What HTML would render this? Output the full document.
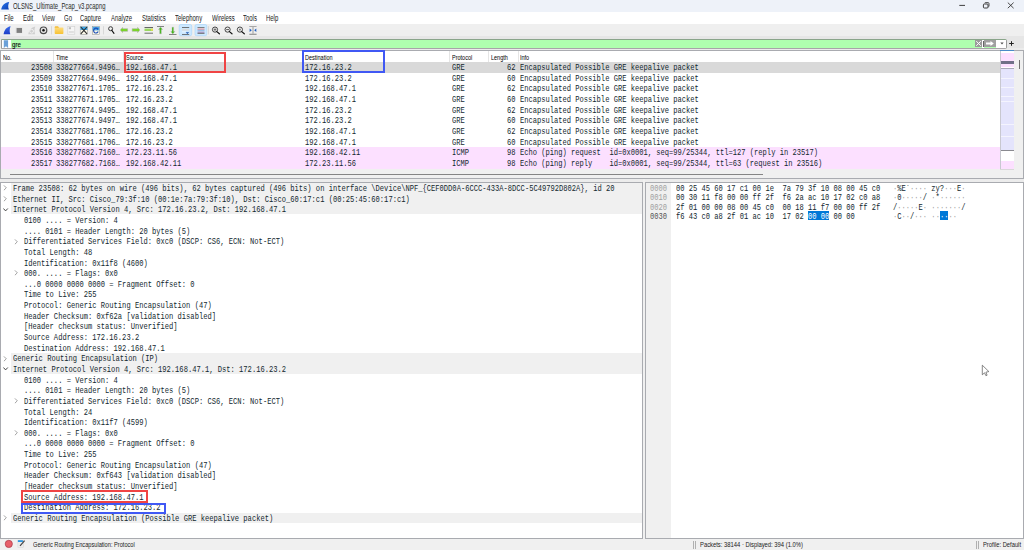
<!DOCTYPE html><html><head><meta charset="utf-8"><style>
html,body{margin:0;padding:0;width:1024px;height:550px;overflow:hidden;background:#fff;position:relative}
.r{position:absolute}
.m{position:absolute;font-family:"Liberation Mono",monospace;font-size:8.2px;line-height:10.667px;height:10.667px;white-space:pre;transform-origin:0 0;transform:scaleX(0.8663)}
.s{position:absolute;font-family:"Liberation Sans",sans-serif;white-space:pre;transform-origin:0 0}
</style></head><body><div class="r" style="left:0px;top:0px;width:1024px;height:12px;background:#eef2f9;"></div>
<div class="s" style="left:13.1px;top:0.30px;font-size:8.4px;transform:scaleX(0.7070);color:#2a2a2a;line-height:12px">OLSNS_Ultimate_Pcap_v3.pcapng</div>
<svg class="r" style="left:0;top:0" width="12" height="12" viewBox="0 0 12 12"><defs><linearGradient id="tf" x1="0" y1="0" x2="1" y2="1"><stop offset="0" stop-color="#2a78f0"/><stop offset="1" stop-color="#0a3cb0"/></linearGradient></defs><path d="M1.2 9.6 C2 5.2 5 2.5 9.2 2.1 C8.1 4.6 7.8 7.2 8.9 9.6 Z" fill="url(#tf)"/></svg>
<svg class="r" style="left:0;top:0" width="1024" height="12" viewBox="0 0 1024 12"><line x1="959.3" y1="5.4" x2="965" y2="5.4" stroke="#2a2a2a" stroke-width="0.9"/><rect x="983.4" y="4" width="4.6" height="4" rx="0.9" fill="none" stroke="#2a2a2a" stroke-width="0.9"/><path d="M984.6 3.2 Q984.8 2.6 985.6 2.6 H988 Q989 2.6 989 3.6 V6 Q989 6.6 988.5 6.8" fill="none" stroke="#2a2a2a" stroke-width="0.8"/><path d="M1007.8 2.6 L1013.6 8.2 M1013.6 2.6 L1007.8 8.2" stroke="#2a2a2a" stroke-width="0.85"/></svg>
<div class="r" style="left:0px;top:12px;width:1024px;height:12px;background:#ffffff;"></div>
<div class="s" style="left:4.4px;top:12.70px;font-size:8.4px;transform:scaleX(0.7100);color:#1a1a1a;line-height:11px">File</div>
<div class="s" style="left:22.7px;top:12.70px;font-size:8.4px;transform:scaleX(0.7100);color:#1a1a1a;line-height:11px">Edit</div>
<div class="s" style="left:41.7px;top:12.70px;font-size:8.4px;transform:scaleX(0.7100);color:#1a1a1a;line-height:11px">View</div>
<div class="s" style="left:63.7px;top:12.70px;font-size:8.4px;transform:scaleX(0.7100);color:#1a1a1a;line-height:11px">Go</div>
<div class="s" style="left:80.3px;top:12.70px;font-size:8.4px;transform:scaleX(0.7100);color:#1a1a1a;line-height:11px">Capture</div>
<div class="s" style="left:111px;top:12.70px;font-size:8.4px;transform:scaleX(0.7100);color:#1a1a1a;line-height:11px">Analyze</div>
<div class="s" style="left:141.7px;top:12.70px;font-size:8.4px;transform:scaleX(0.7100);color:#1a1a1a;line-height:11px">Statistics</div>
<div class="s" style="left:174.5px;top:12.70px;font-size:8.4px;transform:scaleX(0.7100);color:#1a1a1a;line-height:11px">Telephony</div>
<div class="s" style="left:212px;top:12.70px;font-size:8.4px;transform:scaleX(0.7100);color:#1a1a1a;line-height:11px">Wireless</div>
<div class="s" style="left:243.3px;top:12.70px;font-size:8.4px;transform:scaleX(0.7100);color:#1a1a1a;line-height:11px">Tools</div>
<div class="s" style="left:265.9px;top:12.70px;font-size:8.4px;transform:scaleX(0.7100);color:#1a1a1a;line-height:11px">Help</div>
<div class="r" style="left:0px;top:24px;width:1024px;height:12px;background:#efefef;"></div>
<div class="r" style="left:0px;top:36px;width:1024px;height:14px;background:#e6e6e6;"></div>
<div class="r" style="left:0px;top:48px;width:1024px;height:2px;background:#ececec;"></div>
<svg class="r" style="left:0;top:22px" width="270" height="16" viewBox="0 22 270 16">
<defs>
<linearGradient id="fin" x1="0" y1="0" x2="0" y2="1"><stop offset="0" stop-color="#3a6ae8"/><stop offset="1" stop-color="#1f3fc8"/></linearGradient>
<linearGradient id="fold" x1="0" y1="0" x2="0" y2="1"><stop offset="0" stop-color="#ffe08a"/><stop offset="1" stop-color="#f7c234"/></linearGradient>
</defs>
<!-- shark fin -->
<path d="M3.6 34.2 C4.3 30 6.6 26.9 10.7 26.3 C9.6 28.6 9.3 31.5 10.3 34.2 Z" fill="url(#fin)"/>
<!-- stop -->
<rect x="15.6" y="27.4" width="6.8" height="5.8" fill="#e2e2e2"/>
<rect x="16.6" y="28" width="5.4" height="4.9" fill="#7f7f7f"/>
<!-- restart disabled -->
<path d="M28.3 34.2 C29 30.5 31.2 27.4 35.3 26.6 C34.4 29 34.2 31.5 35.1 34.2 Z" fill="#cfcfcf"/>
<circle cx="31.6" cy="31.2" r="1.9" fill="none" stroke="#f4f4f4" stroke-width="0.9"/>
<!-- options -->
<circle cx="43.5" cy="30.3" r="3.3" fill="none" stroke="#4a4a4a" stroke-width="1.2"/>
<circle cx="43.5" cy="30.3" r="2.1" fill="#d0d0d0"/>
<circle cx="43.5" cy="30.3" r="1.2" fill="#111"/>
<!-- separator -->
<rect x="51.2" y="26.2" width="0.8" height="8.2" fill="#d2d2d2"/>
<!-- folder -->
<path d="M54.7 27.3 Q54.7 26.5 55.5 26.5 H58 L59 27.6 H62.8 Q63.4 27.6 63.4 28.3 V33.2 Q63.4 33.9 62.7 33.9 H55.4 Q54.7 33.9 54.7 33.2 Z" fill="url(#fold)"/>
<path d="M54.7 27.3 Q54.7 26.5 55.5 26.5 H58 L59 27.6 H54.7 Z" fill="#eeaa10"/>
<!-- save disabled -->
<rect x="67.8" y="26.6" width="7" height="7.6" fill="#f6f6f6" stroke="#cfcfcf" stroke-width="0.6"/>
<rect x="68.8" y="27.2" width="2.2" height="2" fill="#bdbdbd"/>
<rect x="68.8" y="31.5" width="5" height="1" fill="#c9c9c9"/>
<!-- close -->
<rect x="80.2" y="26.5" width="7.3" height="7.8" fill="#fbf8e8" stroke="#8c8c8c" stroke-width="0.5"/>
<rect x="80.5" y="26.8" width="6.8" height="3.2" fill="#3ea6e8"/>
<path d="M80.8 27 L87 33.8 M87 27 L80.8 33.8" stroke="#2a2a2a" stroke-width="1.1"/>
<!-- reload -->
<rect x="92.3" y="26.5" width="7.3" height="7.8" fill="#fbf8e8" stroke="#8c8c8c" stroke-width="0.5"/>
<rect x="92.6" y="26.8" width="6.8" height="3.6" fill="#4aa8e8"/>
<path d="M97.8 29 A2.4 2.4 0 1 0 98.2 31.6" fill="none" stroke="#1f50b8" stroke-width="1.2"/>
<path d="M96.6 28 L98.6 28.6 L97.6 30.2 Z" fill="#1f50b8"/>
<!-- separator -->
<rect x="103.2" y="26.2" width="0.8" height="8.2" fill="#d2d2d2"/>
<!-- find -->
<circle cx="110.6" cy="28.7" r="2" fill="none" stroke="#3a3a3a" stroke-width="1"/>
<path d="M111.8 30.3 L114 33.3" stroke="#111" stroke-width="1.1" stroke-linecap="round"/>
<!-- back -->
<path d="M120.3 30 L122.6 27.4 V28.7 H127.6 V31.3 H122.6 V32.6 Z" fill="#76d820" stroke="#a8a8a8" stroke-width="0.5"/>
<!-- forward -->
<path d="M139.9 30 L137.6 27.4 V28.7 H132.2 V31.3 H137.6 V32.6 Z" fill="#76d820" stroke="#a8a8a8" stroke-width="0.5"/>
<!-- go to packet -->
<rect x="144.5" y="27" width="8.5" height="0.9" fill="#555"/>
<rect x="144.5" y="28.6" width="8.5" height="2.4" fill="#9ad860"/>
<rect x="151" y="28.8" width="2" height="1.8" fill="#f0e050"/>
<rect x="144.5" y="32.6" width="8.5" height="1.3" fill="#8a8a8a"/>
<!-- first packet -->
<rect x="157" y="26.1" width="7" height="0.7" fill="#555"/>
<path d="M160.5 27 L162.5 29.5 H161.3 V33.8 H159.7 V29.5 H158.5 Z" fill="#3cb810" stroke="#b0b0b0" stroke-width="0.4"/>
<!-- last packet -->
<path d="M172.8 34 L170.8 31.5 H172 V27.2 H173.6 V31.5 H174.8 Z" fill="#3cb810" stroke="#b0b0b0" stroke-width="0.4"/>
<rect x="169" y="34.2" width="7.5" height="0.7" fill="#555"/>
<!-- autoscroll toggled -->
<rect x="179.2" y="24.5" width="12.5" height="11.2" rx="1.5" fill="#cce8ff" stroke="#a6d4fa" stroke-width="0.6"/>
<rect x="182" y="27" width="7.2" height="0.8" fill="#555"/>
<rect x="182" y="28.8" width="7.2" height="1.8" fill="#dcdcdc"/>
<rect x="182" y="31.6" width="4" height="0.6" fill="#fff"/>
<path d="M185.6 32.2 H189.2 L187.4 34 Z" fill="#1f56b0"/>
<rect x="182" y="34.2" width="7.2" height="0.7" fill="#444"/>
<!-- colorize toggled -->
<rect x="195" y="24.5" width="11.8" height="11.2" rx="1.5" fill="#cce8ff" stroke="#a6d4fa" stroke-width="0.6"/>
<rect x="197.5" y="27" width="7" height="0.8" fill="#666"/>
<rect x="197.5" y="28.4" width="7" height="1.4" fill="#f4a8a8"/>
<rect x="197.5" y="29.8" width="7" height="0.6" fill="#5080c0"/>
<rect x="197.5" y="31.6" width="7" height="1.3" fill="#a090b8"/>
<rect x="197.5" y="33.2" width="7" height="0.8" fill="#666"/>
<!-- separator -->
<rect x="208" y="26.2" width="0.8" height="8.2" fill="#d2d2d2"/>
<!-- zoom in -->
<circle cx="215" cy="29.6" r="2.6" fill="none" stroke="#333" stroke-width="0.9"/>
<path d="M216.8 31.6 L219.4 33.8" stroke="#111" stroke-width="1.2" stroke-linecap="round"/>
<path d="M213.6 29.6 H216.4 M215 28.2 V31" stroke="#333" stroke-width="0.6"/>
<!-- zoom out -->
<circle cx="227.6" cy="29.6" r="2.6" fill="none" stroke="#333" stroke-width="0.9"/>
<path d="M229.4 31.6 L232 33.8" stroke="#111" stroke-width="1.2" stroke-linecap="round"/>
<path d="M226.2 29.6 H229" stroke="#333" stroke-width="0.8"/>
<!-- normal size -->
<circle cx="239.9" cy="29.6" r="2.6" fill="none" stroke="#333" stroke-width="0.9"/>
<path d="M241.7 31.6 L244.3 33.8" stroke="#111" stroke-width="1.2" stroke-linecap="round"/>
<rect x="239" y="28.8" width="1.8" height="1.6" fill="#777"/>
<!-- resize columns -->
<rect x="249.3" y="26.2" width="7.3" height="0.7" fill="#888"/>
<rect x="249.3" y="33.8" width="7.3" height="0.8" fill="#666"/>
<rect x="252.3" y="27" width="0.6" height="6.8" fill="#aaa"/>
<rect x="253.3" y="27" width="0.6" height="6.8" fill="#aaa"/>
<path d="M249.6 28.4 L251.8 30.2 L249.6 32 Z" fill="#2060c0"/>
<path d="M256.3 28.4 L254.2 30.2 L256.3 32 Z" fill="#2060c0"/>
</svg>
<div class="r" style="left:1px;top:39px;width:1006px;height:10px;background:#afffaf;border:1px solid #9a9a9a;border-top-color:#8aa58a;border-bottom-color:#a8a4a8;border-radius:0 2px 2px 0;box-sizing:border-box"></div>
<div class="r" style="left:2px;top:40px;width:9px;height:8px;background:#ffffff;"></div>
<svg class="r" style="left:3px;top:39.5px" width="6" height="9" viewBox="0 0 6 9"><path d="M0.8 0.3 H5.1 V7.9 L2.95 6.2 L0.8 7.9 Z" fill="#6a9fd8"/></svg>
<div class="s" style="left:12.2px;top:39.60px;font-size:7.8px;transform:scaleX(0.7900);color:#0a0a0a;line-height:10px;-webkit-text-stroke:0.15px #0a0a0a">gre</div>
<div class="r" style="left:974.5px;top:40px;width:7.1px;height:7px;background:#9a9a9a;"></div>
<svg class="r" style="left:974.5px;top:40px" width="7.1" height="7" viewBox="0 0 7.1 7"><path d="M1.3 1.2 L5.8 5.8 M5.8 1.2 L1.3 5.8" stroke="#fff" stroke-width="1"/></svg>
<div class="r" style="left:981.6px;top:40px;width:2.4px;height:8px;background:#ffffff;"></div>
<div class="r" style="left:982.5px;top:40.5px;width:0.6px;height:6.5px;background:#666;"></div>
<div class="r" style="left:984px;top:40px;width:12px;height:7px;background:#a0a0a0;"></div>
<svg class="r" style="left:984px;top:40px" width="12" height="7" viewBox="0 0 12 7"><path d="M2 2.6 H6.5 V1 L9.8 3.5 L6.5 6 V4.4 H2 Z" fill="#fff"/></svg>
<div class="r" style="left:996px;top:40px;width:10px;height:8px;background:#ffffff;"></div>
<svg class="r" style="left:1000px;top:42px" width="4" height="3" viewBox="0 0 4 3"><path d="M0.3 0.6 H3.7 L2 2.6 Z" fill="#555"/></svg>
<svg class="r" style="left:1009px;top:41px" width="5" height="5" viewBox="0 0 5 5"><path d="M2.5 0.2 V4.8 M0.2 2.5 H4.8" stroke="#222" stroke-width="1"/></svg>
<div class="r" style="left:0px;top:50px;width:1024px;height:1px;background:#a9abb0;"></div>
<div class="r" style="left:0px;top:51px;width:1000px;height:11px;background:#ffffff;"></div>
<div class="r" style="left:0px;top:51px;width:1px;height:128px;background:#a9abb0;"></div>
<div class="r" style="left:1023px;top:51px;width:1px;height:128px;background:#a9abb0;"></div>
<div class="s" style="left:2.5px;top:51.50px;font-size:6.4px;transform:scaleX(0.8600);color:#000;line-height:11px">No.</div>
<div class="s" style="left:55.6px;top:51.50px;font-size:6.4px;transform:scaleX(0.8600);color:#000;line-height:11px">Time</div>
<div class="s" style="left:125.8px;top:51.50px;font-size:6.4px;transform:scaleX(0.8600);color:#000;line-height:11px">Source</div>
<div class="s" style="left:304.7px;top:51.50px;font-size:6.4px;transform:scaleX(0.8600);color:#000;line-height:11px">Destination</div>
<div class="s" style="left:451.6px;top:51.50px;font-size:6.4px;transform:scaleX(0.8600);color:#000;line-height:11px">Protocol</div>
<div class="s" style="left:490.6px;top:51.50px;font-size:6.4px;transform:scaleX(0.8600);color:#000;line-height:11px">Length</div>
<div class="s" style="left:519.7px;top:51.50px;font-size:6.4px;transform:scaleX(0.8600);color:#000;line-height:11px">Info</div>
<div class="r" style="left:53px;top:51px;width:1px;height:11px;background:#e5e5e5;"></div>
<div class="r" style="left:123px;top:51px;width:1px;height:11px;background:#e5e5e5;"></div>
<div class="r" style="left:302px;top:51px;width:1px;height:11px;background:#e5e5e5;"></div>
<div class="r" style="left:449.3px;top:51px;width:1px;height:11px;background:#e5e5e5;"></div>
<div class="r" style="left:488.3px;top:51px;width:1px;height:11px;background:#e5e5e5;"></div>
<div class="r" style="left:517.6px;top:51px;width:1px;height:11px;background:#e5e5e5;"></div>
<div class="r" style="left:1px;top:62.000px;width:999px;height:10.667px;background:#d9d9d9"></div>
<div class="r" style="left:1px;top:72.667px;width:999px;height:10.667px;background:#ffffff"></div>
<div class="r" style="left:1px;top:83.334px;width:999px;height:10.667px;background:#ffffff"></div>
<div class="r" style="left:1px;top:94.001px;width:999px;height:10.667px;background:#ffffff"></div>
<div class="r" style="left:1px;top:104.668px;width:999px;height:10.667px;background:#ffffff"></div>
<div class="r" style="left:1px;top:115.335px;width:999px;height:10.667px;background:#ffffff"></div>
<div class="r" style="left:1px;top:126.002px;width:999px;height:10.667px;background:#ffffff"></div>
<div class="r" style="left:1px;top:136.669px;width:999px;height:10.667px;background:#ffffff"></div>
<div class="r" style="left:1px;top:147.336px;width:999px;height:10.667px;background:#fce0ff"></div>
<div class="r" style="left:1px;top:158.003px;width:999px;height:10.667px;background:#fce0ff"></div>
<div class="m" style="left:30.98px;top:63.00px;color:#12272e;">23508</div>
<div class="m" style="left:55.60px;top:63.00px;color:#12272e;">338277664.9496…</div>
<div class="m" style="left:126.20px;top:63.00px;color:#12272e;">192.168.47.1</div>
<div class="m" style="left:304.70px;top:63.00px;color:#12272e;">172.16.23.2</div>
<div class="m" style="left:451.60px;top:63.00px;color:#12272e;">GRE</div>
<div class="m" style="left:507.07px;top:63.00px;color:#12272e;">62</div>
<div class="m" style="left:519.70px;top:63.00px;color:#12272e;">Encapsulated Possible GRE keepalive packet</div>
<div class="m" style="left:30.98px;top:73.67px;color:#12272e;">23509</div>
<div class="m" style="left:55.60px;top:73.67px;color:#12272e;">338277664.9496…</div>
<div class="m" style="left:126.20px;top:73.67px;color:#12272e;">192.168.47.1</div>
<div class="m" style="left:304.70px;top:73.67px;color:#12272e;">172.16.23.2</div>
<div class="m" style="left:451.60px;top:73.67px;color:#12272e;">GRE</div>
<div class="m" style="left:507.07px;top:73.67px;color:#12272e;">60</div>
<div class="m" style="left:519.70px;top:73.67px;color:#12272e;">Encapsulated Possible GRE keepalive packet</div>
<div class="m" style="left:30.98px;top:84.33px;color:#12272e;">23510</div>
<div class="m" style="left:55.60px;top:84.33px;color:#12272e;">338277671.1705…</div>
<div class="m" style="left:126.20px;top:84.33px;color:#12272e;">172.16.23.2</div>
<div class="m" style="left:304.70px;top:84.33px;color:#12272e;">192.168.47.1</div>
<div class="m" style="left:451.60px;top:84.33px;color:#12272e;">GRE</div>
<div class="m" style="left:507.07px;top:84.33px;color:#12272e;">62</div>
<div class="m" style="left:519.70px;top:84.33px;color:#12272e;">Encapsulated Possible GRE keepalive packet</div>
<div class="m" style="left:30.98px;top:95.00px;color:#12272e;">23511</div>
<div class="m" style="left:55.60px;top:95.00px;color:#12272e;">338277671.1705…</div>
<div class="m" style="left:126.20px;top:95.00px;color:#12272e;">172.16.23.2</div>
<div class="m" style="left:304.70px;top:95.00px;color:#12272e;">192.168.47.1</div>
<div class="m" style="left:451.60px;top:95.00px;color:#12272e;">GRE</div>
<div class="m" style="left:507.07px;top:95.00px;color:#12272e;">60</div>
<div class="m" style="left:519.70px;top:95.00px;color:#12272e;">Encapsulated Possible GRE keepalive packet</div>
<div class="m" style="left:30.98px;top:105.67px;color:#12272e;">23512</div>
<div class="m" style="left:55.60px;top:105.67px;color:#12272e;">338277674.9495…</div>
<div class="m" style="left:126.20px;top:105.67px;color:#12272e;">192.168.47.1</div>
<div class="m" style="left:304.70px;top:105.67px;color:#12272e;">172.16.23.2</div>
<div class="m" style="left:451.60px;top:105.67px;color:#12272e;">GRE</div>
<div class="m" style="left:507.07px;top:105.67px;color:#12272e;">62</div>
<div class="m" style="left:519.70px;top:105.67px;color:#12272e;">Encapsulated Possible GRE keepalive packet</div>
<div class="m" style="left:30.98px;top:116.34px;color:#12272e;">23513</div>
<div class="m" style="left:55.60px;top:116.34px;color:#12272e;">338277674.9497…</div>
<div class="m" style="left:126.20px;top:116.34px;color:#12272e;">192.168.47.1</div>
<div class="m" style="left:304.70px;top:116.34px;color:#12272e;">172.16.23.2</div>
<div class="m" style="left:451.60px;top:116.34px;color:#12272e;">GRE</div>
<div class="m" style="left:507.07px;top:116.34px;color:#12272e;">60</div>
<div class="m" style="left:519.70px;top:116.34px;color:#12272e;">Encapsulated Possible GRE keepalive packet</div>
<div class="m" style="left:30.98px;top:127.00px;color:#12272e;">23514</div>
<div class="m" style="left:55.60px;top:127.00px;color:#12272e;">338277681.1706…</div>
<div class="m" style="left:126.20px;top:127.00px;color:#12272e;">172.16.23.2</div>
<div class="m" style="left:304.70px;top:127.00px;color:#12272e;">192.168.47.1</div>
<div class="m" style="left:451.60px;top:127.00px;color:#12272e;">GRE</div>
<div class="m" style="left:507.07px;top:127.00px;color:#12272e;">62</div>
<div class="m" style="left:519.70px;top:127.00px;color:#12272e;">Encapsulated Possible GRE keepalive packet</div>
<div class="m" style="left:30.98px;top:137.67px;color:#12272e;">23515</div>
<div class="m" style="left:55.60px;top:137.67px;color:#12272e;">338277681.1706…</div>
<div class="m" style="left:126.20px;top:137.67px;color:#12272e;">172.16.23.2</div>
<div class="m" style="left:304.70px;top:137.67px;color:#12272e;">192.168.47.1</div>
<div class="m" style="left:451.60px;top:137.67px;color:#12272e;">GRE</div>
<div class="m" style="left:507.07px;top:137.67px;color:#12272e;">60</div>
<div class="m" style="left:519.70px;top:137.67px;color:#12272e;">Encapsulated Possible GRE keepalive packet</div>
<div class="m" style="left:30.98px;top:148.34px;color:#12272e;">23516</div>
<div class="m" style="left:55.60px;top:148.34px;color:#12272e;">338277682.7160…</div>
<div class="m" style="left:126.20px;top:148.34px;color:#12272e;">172.23.11.56</div>
<div class="m" style="left:304.70px;top:148.34px;color:#12272e;">192.168.42.11</div>
<div class="m" style="left:451.60px;top:148.34px;color:#12272e;">ICMP</div>
<div class="m" style="left:507.07px;top:148.34px;color:#12272e;">98</div>
<div class="m" style="left:519.70px;top:148.34px;color:#12272e;">Echo (ping) request  id=0x0001, seq=99/25344, ttl=127 (reply in 23517)</div>
<div class="m" style="left:30.98px;top:159.00px;color:#12272e;">23517</div>
<div class="m" style="left:55.60px;top:159.00px;color:#12272e;">338277682.7168…</div>
<div class="m" style="left:126.20px;top:159.00px;color:#12272e;">192.168.42.11</div>
<div class="m" style="left:304.70px;top:159.00px;color:#12272e;">172.23.11.56</div>
<div class="m" style="left:451.60px;top:159.00px;color:#12272e;">ICMP</div>
<div class="m" style="left:507.07px;top:159.00px;color:#12272e;">98</div>
<div class="m" style="left:519.70px;top:159.00px;color:#12272e;">Echo (ping) reply    id=0x0001, seq=99/25344, ttl=63 (request in 23516)</div>
<div class="r" style="left:1px;top:169px;width:1022px;height:10px;background:#f0f0f0;"></div>
<div class="r" style="left:10px;top:174px;width:752.6px;height:1px;background:#858585;"></div>
<div class="r" style="left:0px;top:178px;width:1024px;height:1px;background:#a9abb0;"></div>
<div class="r" style="left:1000px;top:51px;width:14px;height:118px;background:#e4e4fc;"></div>
<div class="r" style="left:1014px;top:51px;width:9px;height:127px;background:#f0f0f0;"></div>
<div class="r" style="left:999.5px;top:51px;width:0.8px;height:118px;background:#c8c8d0;"></div>
<div class="r" style="left:1000px;top:50px;width:14px;height:1px;background:#4a8ac8;"></div>
<div class="r" style="left:1000px;top:51px;width:14px;height:2px;background:#ffffff;"></div>
<div class="r" style="left:1000px;top:53px;width:14px;height:8px;background:#fce0ff;"></div>
<div class="r" style="left:1000px;top:61px;width:14px;height:2.5px;background:#707088;"></div>
<div class="r" style="left:1000px;top:63.5px;width:14px;height:3.7px;background:#fce0ff;"></div>
<div class="r" style="left:1000px;top:67.2px;width:14px;height:1px;background:#ffffff;"></div>
<div class="r" style="left:1000px;top:68.2px;width:14px;height:0.9px;background:#a8a8b8;"></div>
<div class="r" style="left:1000px;top:78.3px;width:14px;height:1.2px;background:#f4f4fe;"></div>
<div class="r" style="left:1000px;top:87.3px;width:14px;height:1.2px;background:#f4f4fe;"></div>
<div class="r" style="left:1000px;top:96.3px;width:14px;height:1.2px;background:#f4f4fe;"></div>
<div class="r" style="left:1000px;top:100.7px;width:14px;height:1.2px;background:#f4f4fe;"></div>
<div class="r" style="left:1000px;top:123.8px;width:14px;height:1.2px;background:#f4f4fe;"></div>
<div class="r" style="left:1000px;top:135.8px;width:14px;height:1.2px;background:#f4f4fe;"></div>
<div class="r" style="left:1000px;top:149.5px;width:14px;height:1px;background:#8a8a90;"></div>
<div class="r" style="left:1000px;top:150.5px;width:14px;height:10.5px;background:#ffffff;"></div>
<div class="r" style="left:1000px;top:161px;width:14px;height:8px;background:#fce0ff;"></div>
<div class="r" style="left:1000px;top:169px;width:14px;height:0.8px;background:#d8d8d8;"></div>
<div class="r" style="left:999.5px;top:51px;width:0.8px;height:118px;background:#c8c8d0;"></div>
<div class="r" style="left:1019px;top:60px;width:1px;height:9px;background:#707070;"></div>
<div class="r" style="left:0px;top:179px;width:1024px;height:3px;background:#ececec;"></div>
<div class="r" style="left:643px;top:179px;width:2px;height:360px;background:#f0f0f0;"></div>
<div class="r" style="left:0px;top:182px;width:643px;height:357px;background:#ffffff;border:1px solid #a9abb0;box-sizing:border-box"></div>
<div class="r" style="left:11px;top:183.000px;width:631px;height:31.135px;background:#f0f0f0"></div>
<div class="r" style="left:11px;top:353.320px;width:631px;height:20.490px;background:#f0f0f0"></div>
<div class="r" style="left:11px;top:512.995px;width:631px;height:9.845px;background:#f0f0f0"></div>
<div class="m" style="left:13.10px;top:184.00px;color:#12272e;;transform:scaleX(0.8682)">Frame 23508: 62 bytes on wire (496 bits), 62 bytes captured (496 bits) on interface \Device\NPF_{CEF0DD0A-6CCC-433A-8DCC-5C49792D802A}, id 20</div>
<svg class="r" style="left:3.3px;top:185.30px" width="5" height="6" viewBox="0 0 5 6"><path d="M0.9 0.4 L3.3 2.8 L0.9 5.2" fill="none" stroke="#8a8a8a" stroke-width="0.8"/></svg>
<div class="m" style="left:13.10px;top:194.65px;color:#12272e;;transform:scaleX(0.8682)">Ethernet II, Src: Cisco_79:3f:10 (00:1e:7a:79:3f:10), Dst: Cisco_60:17:c1 (00:25:45:60:17:c1)</div>
<svg class="r" style="left:3.3px;top:195.95px" width="5" height="6" viewBox="0 0 5 6"><path d="M0.9 0.4 L3.3 2.8 L0.9 5.2" fill="none" stroke="#8a8a8a" stroke-width="0.8"/></svg>
<div class="m" style="left:13.10px;top:205.29px;color:#12272e;;transform:scaleX(0.8682)">Internet Protocol Version 4, Src: 172.16.23.2, Dst: 192.168.47.1</div>
<svg class="r" style="left:2.8px;top:207.59px" width="6" height="5" viewBox="0 0 6 5"><path d="M0.4 0.5 L2.6 2.9 L4.8 0.5" fill="none" stroke="#333" stroke-width="0.9"/></svg>
<div class="m" style="left:23.80px;top:215.94px;color:#12272e;;transform:scaleX(0.8682)">0100 .... = Version: 4</div>
<div class="m" style="left:23.80px;top:226.58px;color:#12272e;;transform:scaleX(0.8682)">.... 0101 = Header Length: 20 bytes (5)</div>
<div class="m" style="left:23.80px;top:237.22px;color:#12272e;;transform:scaleX(0.8682)">Differentiated Services Field: 0xc0 (DSCP: CS6, ECN: Not-ECT)</div>
<svg class="r" style="left:14.0px;top:238.53px" width="5" height="6" viewBox="0 0 5 6"><path d="M0.9 0.4 L3.3 2.8 L0.9 5.2" fill="none" stroke="#8a8a8a" stroke-width="0.8"/></svg>
<div class="m" style="left:23.80px;top:247.87px;color:#12272e;;transform:scaleX(0.8682)">Total Length: 48</div>
<div class="m" style="left:23.80px;top:258.51px;color:#12272e;;transform:scaleX(0.8682)">Identification: 0x11f8 (4600)</div>
<div class="m" style="left:23.80px;top:269.16px;color:#12272e;;transform:scaleX(0.8682)">000. .... = Flags: 0x0</div>
<svg class="r" style="left:14.0px;top:270.46px" width="5" height="6" viewBox="0 0 5 6"><path d="M0.9 0.4 L3.3 2.8 L0.9 5.2" fill="none" stroke="#8a8a8a" stroke-width="0.8"/></svg>
<div class="m" style="left:23.80px;top:279.81px;color:#12272e;;transform:scaleX(0.8682)">...0 0000 0000 0000 = Fragment Offset: 0</div>
<div class="m" style="left:23.80px;top:290.45px;color:#12272e;;transform:scaleX(0.8682)">Time to Live: 255</div>
<div class="m" style="left:23.80px;top:301.10px;color:#12272e;;transform:scaleX(0.8682)">Protocol: Generic Routing Encapsulation (47)</div>
<div class="m" style="left:23.80px;top:311.74px;color:#12272e;;transform:scaleX(0.8682)">Header Checksum: 0xf62a [validation disabled]</div>
<div class="m" style="left:23.80px;top:322.38px;color:#12272e;;transform:scaleX(0.8682)">[Header checksum status: Unverified]</div>
<div class="m" style="left:23.80px;top:333.03px;color:#12272e;;transform:scaleX(0.8682)">Source Address: 172.16.23.2</div>
<div class="m" style="left:23.80px;top:343.67px;color:#12272e;;transform:scaleX(0.8682)">Destination Address: 192.168.47.1</div>
<div class="m" style="left:13.10px;top:354.32px;color:#12272e;;transform:scaleX(0.8682)">Generic Routing Encapsulation (IP)</div>
<svg class="r" style="left:3.3px;top:355.62px" width="5" height="6" viewBox="0 0 5 6"><path d="M0.9 0.4 L3.3 2.8 L0.9 5.2" fill="none" stroke="#8a8a8a" stroke-width="0.8"/></svg>
<div class="m" style="left:13.10px;top:364.97px;color:#12272e;;transform:scaleX(0.8682)">Internet Protocol Version 4, Src: 192.168.47.1, Dst: 172.16.23.2</div>
<svg class="r" style="left:2.8px;top:367.27px" width="6" height="5" viewBox="0 0 6 5"><path d="M0.4 0.5 L2.6 2.9 L4.8 0.5" fill="none" stroke="#333" stroke-width="0.9"/></svg>
<div class="m" style="left:23.80px;top:375.61px;color:#12272e;;transform:scaleX(0.8682)">0100 .... = Version: 4</div>
<div class="m" style="left:23.80px;top:386.25px;color:#12272e;;transform:scaleX(0.8682)">.... 0101 = Header Length: 20 bytes (5)</div>
<div class="m" style="left:23.80px;top:396.90px;color:#12272e;;transform:scaleX(0.8682)">Differentiated Services Field: 0xc0 (DSCP: CS6, ECN: Not-ECT)</div>
<svg class="r" style="left:14.0px;top:398.20px" width="5" height="6" viewBox="0 0 5 6"><path d="M0.9 0.4 L3.3 2.8 L0.9 5.2" fill="none" stroke="#8a8a8a" stroke-width="0.8"/></svg>
<div class="m" style="left:23.80px;top:407.54px;color:#12272e;;transform:scaleX(0.8682)">Total Length: 24</div>
<div class="m" style="left:23.80px;top:418.19px;color:#12272e;;transform:scaleX(0.8682)">Identification: 0x11f7 (4599)</div>
<div class="m" style="left:23.80px;top:428.83px;color:#12272e;;transform:scaleX(0.8682)">000. .... = Flags: 0x0</div>
<svg class="r" style="left:14.0px;top:430.13px" width="5" height="6" viewBox="0 0 5 6"><path d="M0.9 0.4 L3.3 2.8 L0.9 5.2" fill="none" stroke="#8a8a8a" stroke-width="0.8"/></svg>
<div class="m" style="left:23.80px;top:439.48px;color:#12272e;;transform:scaleX(0.8682)">...0 0000 0000 0000 = Fragment Offset: 0</div>
<div class="m" style="left:23.80px;top:450.12px;color:#12272e;;transform:scaleX(0.8682)">Time to Live: 255</div>
<div class="m" style="left:23.80px;top:460.77px;color:#12272e;;transform:scaleX(0.8682)">Protocol: Generic Routing Encapsulation (47)</div>
<div class="m" style="left:23.80px;top:471.41px;color:#12272e;;transform:scaleX(0.8682)">Header Checksum: 0xf643 [validation disabled]</div>
<div class="m" style="left:23.80px;top:482.06px;color:#12272e;;transform:scaleX(0.8682)">[Header checksum status: Unverified]</div>
<div class="m" style="left:23.80px;top:492.70px;color:#12272e;;transform:scaleX(0.8682)">Source Address: 192.168.47.1</div>
<div class="m" style="left:23.80px;top:503.35px;color:#12272e;;transform:scaleX(0.8682)">Destination Address: 172.16.23.2</div>
<div class="m" style="left:13.10px;top:514.00px;color:#12272e;;transform:scaleX(0.8682)">Generic Routing Encapsulation (Possible GRE keepalive packet)</div>
<svg class="r" style="left:3.3px;top:515.29px" width="5" height="6" viewBox="0 0 5 6"><path d="M0.9 0.4 L3.3 2.8 L0.9 5.2" fill="none" stroke="#8a8a8a" stroke-width="0.8"/></svg>
<div class="r" style="left:21.2px;top:490px;width:126.6px;height:12.6px;border:2px solid #f04444;box-sizing:border-box"></div>
<div class="r" style="left:21.2px;top:502.6px;width:145px;height:11.6px;border:2px solid #4058f4;box-sizing:border-box"></div>
<div class="r" style="left:124px;top:52px;width:102.2px;height:21px;border:2px solid #f04444;box-sizing:border-box"></div>
<div class="r" style="left:302px;top:50.1px;width:82.6px;height:23.2px;border:2px solid #4058f4;box-sizing:border-box"></div>
<div class="r" style="left:645px;top:182px;width:379px;height:357px;background:#ffffff;border:1px solid #a9abb0;box-sizing:border-box"></div>
<div class="r" style="left:646px;top:183px;width:25.3px;height:355px;background:#f0f0f0;"></div>
<div class="m" style="left:650.00px;top:183.60px;color:#a0a0a0;line-height:9.47px;height:9.47px">0000</div>
<div class="m" style="left:675.58px;top:183.60px;color:#12272e;line-height:9.47px;height:9.47px">00 25 45 60 17 c1 00 1e  7a 79 3f 10 08 00 45 c0</div>
<div class="m" style="left:892.99px;top:183.60px;color:#12272e;line-height:9.47px;height:9.47px"><span style="color:#a0a0a0">·</span>%E`<span style="color:#a0a0a0">·</span><span style="color:#a0a0a0">·</span><span style="color:#a0a0a0">·</span><span style="color:#a0a0a0">·</span> zy?<span style="color:#a0a0a0">·</span><span style="color:#a0a0a0">·</span><span style="color:#a0a0a0">·</span>E<span style="color:#a0a0a0">·</span></div>
<div class="m" style="left:650.00px;top:193.07px;color:#a0a0a0;line-height:9.47px;height:9.47px">0010</div>
<div class="m" style="left:675.58px;top:193.07px;color:#12272e;line-height:9.47px;height:9.47px">00 30 11 f8 00 00 ff 2f  f6 2a ac 10 17 02 c0 a8</div>
<div class="m" style="left:892.99px;top:193.07px;color:#12272e;line-height:9.47px;height:9.47px"><span style="color:#a0a0a0">·</span>0<span style="color:#a0a0a0">·</span><span style="color:#a0a0a0">·</span><span style="color:#a0a0a0">·</span><span style="color:#a0a0a0">·</span><span style="color:#a0a0a0">·</span>/ <span style="color:#a0a0a0">·</span>*<span style="color:#a0a0a0">·</span><span style="color:#a0a0a0">·</span><span style="color:#a0a0a0">·</span><span style="color:#a0a0a0">·</span><span style="color:#a0a0a0">·</span><span style="color:#a0a0a0">·</span></div>
<div class="m" style="left:650.00px;top:202.54px;color:#a0a0a0;line-height:9.47px;height:9.47px">0020</div>
<div class="m" style="left:675.58px;top:202.54px;color:#12272e;line-height:9.47px;height:9.47px">2f 01 00 00 08 00 45 c0  00 18 11 f7 00 00 ff 2f</div>
<div class="m" style="left:892.99px;top:202.54px;color:#12272e;line-height:9.47px;height:9.47px">/<span style="color:#a0a0a0">·</span><span style="color:#a0a0a0">·</span><span style="color:#a0a0a0">·</span><span style="color:#a0a0a0">·</span><span style="color:#a0a0a0">·</span>E<span style="color:#a0a0a0">·</span> <span style="color:#a0a0a0">·</span><span style="color:#a0a0a0">·</span><span style="color:#a0a0a0">·</span><span style="color:#a0a0a0">·</span><span style="color:#a0a0a0">·</span><span style="color:#a0a0a0">·</span><span style="color:#a0a0a0">·</span>/</div>
<div class="m" style="left:650.00px;top:212.01px;color:#555;line-height:9.47px;height:9.47px">0030</div>
<div class="m" style="left:675.58px;top:212.01px;color:#12272e;line-height:9.47px;height:9.47px">f6 43 c0 a8 2f 01 ac 10  17 02 00 00 00 00</div>
<div class="m" style="left:892.99px;top:212.01px;color:#12272e;line-height:9.47px;height:9.47px"><span style="color:#a0a0a0">·</span>C<span style="color:#a0a0a0">·</span><span style="color:#a0a0a0">·</span>/<span style="color:#a0a0a0">·</span><span style="color:#a0a0a0">·</span><span style="color:#a0a0a0">·</span> <span style="color:#a0a0a0">·</span><span style="color:#a0a0a0">·</span><span style="color:#a0a0a0">·</span><span style="color:#a0a0a0">·</span><span style="color:#a0a0a0">·</span><span style="color:#a0a0a0">·</span></div>
<div class="r" style="left:807.731px;top:211.01px;width:21.314999999999998px;height:9.47px;background:#0078d7;"></div>
<div class="m" style="left:807.73px;top:212.01px;color:#ffffff;line-height:9.47px;height:9.47px">00 00</div>
<div class="r" style="left:939.884px;top:211.01px;width:8.526px;height:9.47px;background:#0078d7;"></div>
<div class="m" style="left:939.88px;top:212.01px;color:#ffffff;line-height:9.47px;height:9.47px">··</div>
<svg class="r" style="left:981px;top:364px" width="10" height="14" viewBox="981 364 10 14"><path d="M982.3 365.2 L982.3 374.8 L984.5 372.8 L985.9 375.7 L987.1 375.2 L985.9 372.2 L988.9 371.6 Z" fill="#fff" stroke="#555" stroke-width="0.7" stroke-linejoin="round"/></svg>
<div class="r" style="left:0px;top:539px;width:1024px;height:11px;background:#f0f0f0;"></div>
<svg class="r" style="left:0;top:536px" width="30" height="14" viewBox="0 536 30 14"><circle cx="8.8" cy="543.9" r="3.6" fill="#e8606a" stroke="#a83848" stroke-width="0.7"/><rect x="17.9" y="540.2" width="5.8" height="7.3" fill="#ececec" stroke="#d0d0d0" stroke-width="0.4"/><rect x="17.9" y="540.2" width="5" height="1.8" fill="#2b95e0"/><path d="M24.6 540.6 L20 545.8" stroke="#444" stroke-width="1.2"/></svg>
<div class="s" style="left:32.8px;top:539.00px;font-size:7.7px;transform:scaleX(0.7350);color:#1a1a1a;line-height:11px">Generic Routing Encapsulation: Protocol</div>
<div class="r" style="left:692.5px;top:541px;width:0.8px;height:8px;background:#b0b0b0;"></div>
<div class="r" style="left:695px;top:541px;width:0.8px;height:8px;background:#b0b0b0;"></div>
<div class="s" style="left:700.3px;top:539.00px;font-size:7.7px;transform:scaleX(0.7600);color:#1a1a1a;line-height:11px">Packets: 38144 · Displayed: 394 (1.0%)</div>
<div class="r" style="left:975.7px;top:541px;width:0.8px;height:8px;background:#b0b0b0;"></div>
<div class="r" style="left:977.5px;top:541px;width:0.8px;height:8px;background:#b0b0b0;"></div>
<div class="s" style="left:982.9px;top:539.00px;font-size:7.7px;transform:scaleX(0.7540);color:#1a1a1a;line-height:11px">Profile: Default</div></body></html>
